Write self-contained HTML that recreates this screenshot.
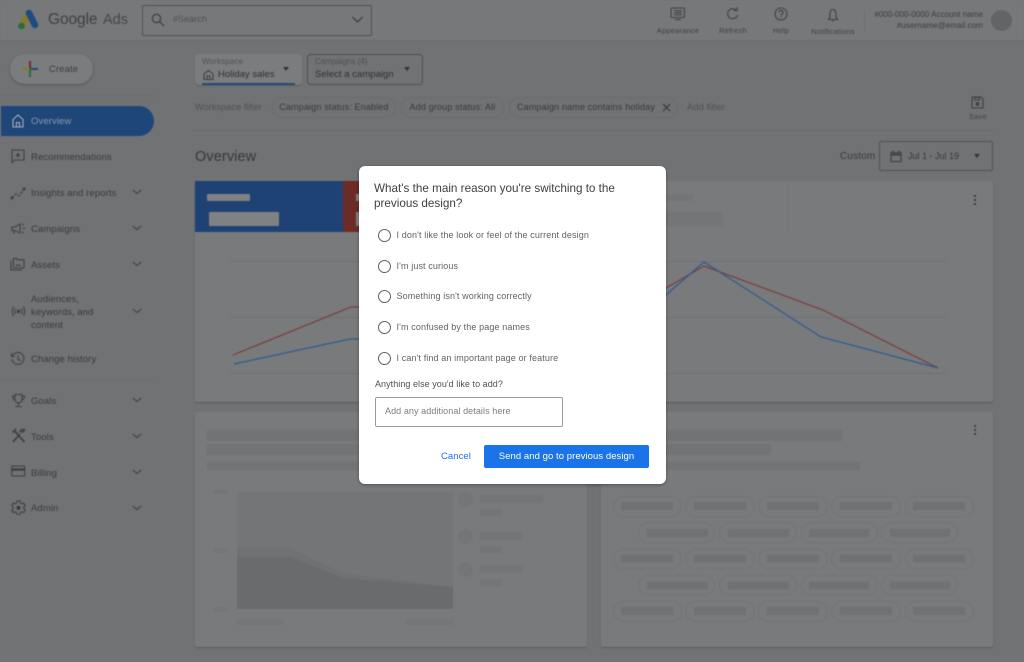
<!DOCTYPE html>
<html><head><meta charset="utf-8"><style>
*{box-sizing:border-box}
html,body{margin:0;padding:0;width:1024px;height:662px;overflow:hidden;background:#717274}
body{font-family:"Liberation Sans",sans-serif;position:relative;color:#3c3d3f}
.t{position:absolute;white-space:nowrap;line-height:1}
.b{position:absolute}
#bg{position:absolute;left:0;top:0;width:1024px;height:662px;filter:blur(.4px)}
.card{position:absolute;background:#797a7c;border-radius:2px;box-shadow:0 1px 1px #5a5b5d}
.nav{font-size:9.5px;letter-spacing:.1px;color:#38393b;left:31px}
.hd{font-size:7.5px;color:#3f4042;letter-spacing:.2px;text-align:center;transform:translateX(-50%)}
.chip{position:absolute;top:97px;height:21px;border:1px solid #6c6d6f;border-radius:11px;font-size:9px;letter-spacing:.16px;line-height:19px;color:#38393b;text-align:center;white-space:nowrap}
.bar{position:absolute;background:#6f7072}
.q{font-size:9px;letter-spacing:.12px;color:#5f6368}
#dlg{position:absolute;left:359px;top:166px;width:307px;height:318px;background:#fff;border-radius:6px;box-shadow:0 1px 3px rgba(0,0,0,.35)}
#dlg>*{filter:blur(.2px)}
.r{position:absolute;left:19px;width:13px;height:13px;border:1.5px solid #5f6368;border-radius:50%}
</style></head><body>
<div id="bg">
<div class="b" style="left:0;top:0;width:1024px;height:41px;background:#77787a;border-bottom:1px solid #6b6c6e"></div>
<svg class="b" style="left:17px;top:9px" width="23" height="21" viewBox="0 0 23 21"><path d="M5 16L11 6" stroke="#8a7a22" stroke-width="6" stroke-linecap="round"/><path d="M12 4L18 16" stroke="#1f4b80" stroke-width="6.5" stroke-linecap="round"/><circle cx="4.5" cy="17" r="3.3" fill="#2a6a40"/></svg>
<div class="t" style="left:48px;top:12px;font-size:15.5px;color:#3e3f41;letter-spacing:-.1px">Google</div>
<div class="t" style="left:103px;top:13px;font-size:14.5px;color:#444547">Ads</div>
<div class="b" style="left:142px;top:5px;width:230px;height:31px;border:1px solid #505153;border-radius:2px"></div>
<svg class="b" style="left:150px;top:12px" width="16" height="16" fill="none" stroke="#3f4042" stroke-width="1.3"><circle cx="6.5" cy="6.5" r="4.2"/><path d="M9.7 9.7L14 14"/></svg>
<div class="t" style="left:173px;top:15px;font-size:9px;color:#505153;letter-spacing:.05px">#Search</div>
<svg class="b" style="left:351px;top:15px" width="13" height="10" fill="none" stroke="#38393b" stroke-width="1.2"><path d="M1.500 2L6.500 7L11.500 2"/></svg>

<svg class="b" style="left:670px;top:7px" width="16" height="14" fill="none" stroke="#3f4042" stroke-width="1"><rect x="1" y="1" width="13.500" height="9.500" rx="1"/><path d="M4 3.800h8M4 5.800h8M4 7.800h8M5 12.500h6"/></svg>
<div class="t hd" style="left:678px;top:27px">Appearance</div>
<svg class="b" style="left:725px;top:7px" width="15" height="14" fill="none" stroke="#3f4042" stroke-width="1.100"><path d="M11.500 3.500A5 5 0 1 0 12.500 8"/><path d="M8.500 3.500h3.600V0"/></svg>
<div class="t hd" style="left:733px;top:27px">Refresh</div>
<svg class="b" style="left:774px;top:7px" width="14" height="14" fill="none" stroke="#3f4042" stroke-width="1.100"><circle cx="7" cy="7" r="6"/><path d="M5 5.500a2 2 0 1 1 3 1.700c-.7.4-1 .8-1 1.600M7 10v1"/></svg>
<div class="t hd" style="left:781px;top:27px">Help</div>
<svg class="b" style="left:826px;top:8px" width="14" height="15" fill="none" stroke="#3f4042" stroke-width="1.100"><path d="M7 1.500C4.500 1.500 4 4 4 6v3.500L2.500 11.500h9L10 9.500V6C10 4 9.500 1.500 7 1.500zM6 13h2"/></svg>
<div class="t hd" style="left:833px;top:28px">Notifications</div>
<div class="b" style="left:864px;top:10px;width:1px;height:21px;background:#6c6d6f"></div>
<div class="t" style="right:41px;top:11px;font-size:8px;color:#3c3d3f;letter-spacing:.06px">#000-000-0000 Account name</div>
<div class="t" style="right:41px;top:22px;font-size:8px;color:#3c3d3f;letter-spacing:.08px">#username@email.com</div>
<div class="b" style="left:991px;top:10px;width:21px;height:21px;border-radius:50%;background:#636466"></div>

<div class="b" style="left:10px;top:54px;width:83px;height:30px;border-radius:15px;background:#7b7c7e;box-shadow:0 1px 2px #545557"></div>
<svg class="b" style="left:21px;top:60px" width="17" height="18" stroke-width="2"><path d="M9 1v8" stroke="#6c2b27"/><path d="M9 9v8" stroke="#2a6a40"/><path d="M1 9h8" stroke="#8a7a22"/><path d="M9 9h8" stroke="#1f4b80"/></svg>
<div class="t" style="left:49px;top:65px;font-size:9.500px;color:#3c3d3f;letter-spacing:.1px">Create</div>
<div class="b" style="left:0;top:95px;width:154px;height:1px;background:#6c6d6f"></div>

<div class="b" style="left:1px;top:106px;width:153px;height:30px;border-radius:0 15px 15px 0;background:#1e4679"></div>
<svg class="b" style="left:11px;top:113px" width="14" height="16" fill="none" stroke="#a8aeb8" stroke-width="1.100"><path d="M2 14V6.500L7 2l5 4.500V14zM5.500 14V9.500h3V14"/></svg>
<div class="t nav" style="top:117px;color:#8d99ac">Overview</div>

<svg class="b" style="left:10px;top:148px" width="16" height="16" fill="none" stroke="#3f4042" stroke-width="1.100"><path d="M2 2h12v10H4.500L2 14.500z"/><path d="M8 4.500l.8 1.700 1.700.2-1.300 1.100.4 1.700L8 8.300l-1.600.9.400-1.700-1.300-1.100 1.700-.2z" fill="#3f4042" stroke="none"/></svg>
<div class="t nav" style="top:153px">Recommendations</div>
<svg class="b" style="left:10px;top:186px" width="16" height="15" fill="none" stroke="#3f4042" stroke-width="1.100"><path d="M2 12L6 7.500 9 10 14 3" stroke-dasharray="3 1.200"/><circle cx="2" cy="12" r="1" fill="#3f4042"/><circle cx="14" cy="3" r="1" fill="#3f4042"/></svg>
<div class="t nav" style="top:189px">Insights and reports</div>
<svg class="b" style="left:11px;top:222px" width="15" height="14" fill="none" stroke="#3f4042" stroke-width="1.100"><path d="M1 5h3l5-3v9L4 8.500H1zM3 8.500V12M11 3l2-1M11.500 6.500H14M11 10l2 1"/></svg>
<div class="t nav" style="top:225px">Campaigns</div>
<svg class="b" style="left:10px;top:257px" width="16" height="14" fill="none" stroke="#3f4042" stroke-width="1.100"><path d="M3.500 1.500h3l1 1.200h6.500v8.300H3.500zM1 3.500V13h11"/><path d="M5.500 9l1.800-2 1.200 1.200 1-.9L11.500 9z" fill="#3f4042" stroke="none"/></svg>
<div class="t nav" style="top:261px">Assets</div>
<svg class="b" style="left:11px;top:305px" width="15" height="13" fill="none" stroke="#3f4042" stroke-width="1.100"><path d="M2.500 1.500C1 4.500 1 8 2.500 11M12.500 1.500C14 4.500 14 8 12.500 11M4.500 3.500C3.800 5 3.800 7.500 4.500 9M10.500 3.500C11.200 5 11.200 7.500 10.500 9"/><circle cx="7.500" cy="6.300" r="1.300" fill="#3f4042"/></svg>
<div class="t nav" style="top:295px">Audiences,</div>
<div class="t nav" style="top:308px">keywords, and</div>
<div class="t nav" style="top:321px">content</div>
<svg class="b" style="left:10px;top:351px" width="16" height="16" fill="none" stroke="#3f4042" stroke-width="1.100"><path d="M2.500 5A6 6 0 1 1 2 8M1.500 2v3.500H5M8 4.500V8l2.500 1.800"/></svg>
<div class="t nav" style="top:355px">Change history</div>
<div class="b" style="left:0;top:379px;width:154px;height:1px;background:#6c6d6f"></div>
<svg class="b" style="left:11px;top:393px" width="15" height="15" fill="none" stroke="#3f4042" stroke-width="1.100"><path d="M4 1.500h7v5a3.500 3.500 0 0 1-7 0zM4 3H1.500c0 2.500.8 3.500 2.700 4M11 3h2.500c0 2.500-.8 3.500-2.700 4M7.500 10v2.500M4.500 13.500h6"/></svg>
<div class="t nav" style="top:397px">Goals</div>
<svg class="b" style="left:11px;top:428px" width="15" height="16" fill="none" stroke="#3f4042" stroke-width="1.700"><path d="M2 14L9 6M13.500 14L4 3.500M1.500 4.500L5 1M9 4.500a3 3 0 0 1 4.500-2.500L11 4.500"/></svg>
<div class="t nav" style="top:433px">Tools</div>
<svg class="b" style="left:11px;top:465px" width="15" height="13" fill="none" stroke="#3f4042" stroke-width="1.100"><rect x=".7" y="1" width="13" height="10" rx=".5"/><path d="M.7 4.500h13" stroke-width="2.500"/></svg>
<div class="t nav" style="top:469px">Billing</div>
<svg class="b" style="left:11px;top:500px" width="15" height="15" fill="none" stroke="#3f4042" stroke-width="1.100"><path d="M6 1h3l.4 2 1.500.8 1.900-.7 1.500 2.600-1.500 1.300v1.700l1.500 1.300-1.500 2.600-1.900-.7-1.500.8-.4 2H6l-.4-2-1.500-.8-1.900.7L.7 10l1.500-1.300V7L.7 5.700l1.500-2.600 1.900.7 1.500-.8z"/><circle cx="7.500" cy="7.800" r="1.600" fill="#3f4042"/></svg>
<div class="t nav" style="top:504px">Admin</div>
<svg class="b" style="left:132px;top:188px" width="10" height="330" fill="none" stroke="#3f4042" stroke-width="1.100"><path d="M.7 2L5 5.500 9.300 2M.7 38l4.300 3.500L9.300 38M.7 74l4.300 3.500L9.300 74M.7 121l4.300 3.500L9.300 121M.7 210l4.300 3.500L9.300 210M.7 246l4.300 3.500L9.300 246M.7 282l4.300 3.500L9.300 282M.7 318l4.300 3.500L9.300 318"/></svg>

<div class="b" style="left:195px;top:54px;width:107px;height:31px;background:#7b7c7e;border-radius:4px;box-shadow:0 1px 1px #5e5f61"></div>
<div class="t" style="left:202px;top:58px;font-size:8px;color:#505153;letter-spacing:.15px">Workspace</div>
<svg class="b" style="left:203px;top:69px" width="11" height="12" fill="none" stroke="#3f4042" stroke-width="1.100"><path d="M1 10.500V5L5.500 1.500 10 5v5.500zM4 10.500V7h3v3.500"/></svg>
<div class="t" style="left:218px;top:70px;font-size:9.500px;color:#2f3032">Holiday sales</div>
<div class="b" style="left:283px;top:67px;border:3.500px solid transparent;border-top:4px solid #333436"></div>
<div class="b" style="left:202px;top:83px;width:93px;height:2px;background:#1f4b80"></div>
<div class="b" style="left:307px;top:54px;width:116px;height:31px;border:1px solid #505153;border-radius:4px"></div>
<div class="t" style="left:315px;top:58px;font-size:8px;color:#505153">Campaigns (4)</div>
<div class="t" style="left:315px;top:70px;font-size:9.500px;color:#2f3032;letter-spacing:.03px">Select a campaign</div>
<div class="b" style="left:404px;top:67px;border:3.500px solid transparent;border-top:4px solid #333436"></div>

<div class="t" style="left:195px;top:103px;font-size:9px;color:#505153;letter-spacing:.16px">Workspace filter</div>
<div class="chip" style="left:272px;width:124px">Campaign status: Enabled</div>
<div class="chip" style="left:401px;width:103px">Add group status: All</div>
<div class="chip" style="left:509px;width:169px;text-align:left;padding-left:7px">Campaign name contains holiday</div>
<svg class="b" style="left:662px;top:103px" width="9" height="9" stroke="#333436" stroke-width="1"><path d="M1 1l7 7M8 1l-7 7"/></svg>
<div class="t" style="left:687px;top:103px;font-size:9.500px;color:#505153">Add filter</div>
<svg class="b" style="left:971px;top:96px" width="13" height="13" fill="none" stroke="#3f4042" stroke-width="1.100"><path d="M1 1h9l2 2v9H1z"/><path d="M3.500 1.500h5v2.500h-5z"/><circle cx="6.500" cy="8" r="1.300" fill="#3f4042"/></svg>
<div class="t hd" style="left:978px;top:113px;color:#444547">Save</div>
<div class="b" style="left:195px;top:130px;width:798px;height:1px;background:#6c6d6f"></div>

<div class="t" style="left:195px;top:150px;font-size:14.500px;color:#37383a;letter-spacing:.1px">Overview</div>
<div class="t" style="left:840px;top:152px;font-size:10px;color:#38393b;letter-spacing:.15px">Custom</div>
<div class="b" style="left:879px;top:141px;width:114px;height:30px;border:1px solid #505153;border-radius:2px"></div>
<svg class="b" style="left:890px;top:150px" width="12" height="13" fill="none" stroke="#3f4042" stroke-width="1.100"><rect x="1" y="2.500" width="10" height="9"/><path d="M1 4.500h10" stroke-width="2"/><path d="M3 .5v2M9 .5v2"/></svg>
<div class="t" style="left:908px;top:152px;font-size:9px;color:#38393b">Jul 1 - Jul 19</div>
<div class="b" style="left:974px;top:154px;border:3.500px solid transparent;border-top:4px solid #333436"></div>

<div class="card" style="left:195px;top:181px;width:798px;height:221px"></div>
<div class="b" style="left:195px;top:181px;width:148px;height:51px;background:#1d4273"></div>
<div class="b" style="left:343px;top:181px;width:40px;height:51px;background:#6c2b27"></div>
<div class="b" style="left:207px;top:194px;width:43px;height:7px;background:#808183;border-radius:1px"></div>
<div class="b" style="left:209px;top:212px;width:70px;height:14px;background:#808183;border-radius:1px"></div>
<div class="b" style="left:356px;top:194px;width:20px;height:7px;background:#808183"></div>
<div class="b" style="left:356px;top:212px;width:20px;height:14px;background:#808183"></div>
<div class="bar" style="left:650px;top:194px;width:43px;height:7px;background:#747577"></div>
<div class="bar" style="left:650px;top:212px;width:73px;height:14px;background:#747577"></div>
<div class="b" style="left:787px;top:183px;width:1px;height:49px;background:#727375"></div>
<svg class="b" style="left:0;top:0" width="1024" height="662" fill="none">
<path d="M230 261.500H946M230 317.500H946M230 373.500H946" stroke="#6f7072" stroke-width="1"/>
<path d="M233 355L351 307L365 307L660 291.500L704 266L823 310L938 368" stroke="#7d3b3a" stroke-width="1.200"/>
<path d="M234 364L350 339L365 339L660 300L704 262L821 337L938 368" stroke="#2c5a94" stroke-width="1.200"/>
</svg>
<svg class="b" style="left:973px;top:194px" width="4" height="12" fill="#38393b"><circle cx="2" cy="2" r="1.100"/><circle cx="2" cy="6" r="1.100"/><circle cx="2" cy="10" r="1.100"/></svg>

<div class="card" style="left:195px;top:412px;width:392px;height:235px"></div>
<div class="bar" style="left:207px;top:430px;width:200px;height:11px;background:#727375"></div>
<div class="bar" style="left:207px;top:444px;width:200px;height:11px;background:#727375"></div>
<div class="bar" style="left:207px;top:462px;width:200px;height:8px;background:#727375"></div>
<div class="bar" style="left:213px;top:489px;width:15px;height:5px;background:#757678"></div>
<div class="bar" style="left:213px;top:548px;width:15px;height:5px;background:#757678"></div>
<div class="bar" style="left:213px;top:607px;width:15px;height:5px;background:#757678"></div>
<svg class="b" style="left:237px;top:492px" width="216" height="117"><rect width="216" height="117" fill="#747577"/><path d="M0 56H53L106 81L216 95V117H0z" fill="#707173"/><path d="M0 65H53L106 86L216 95V117H0z" fill="#6a6b6d"/></svg>
<div class="bar" style="left:236px;top:619px;width:48px;height:6px;background:#757678"></div>
<div class="bar" style="left:405px;top:619px;width:48px;height:6px;background:#757678"></div>
<div class="b" style="left:458px;top:492px;width:15px;height:15px;border-radius:50%;background:#747577"></div>
<div class="b" style="left:458px;top:529px;width:15px;height:15px;border-radius:50%;background:#747577"></div>
<div class="b" style="left:458px;top:562px;width:15px;height:15px;border-radius:50%;background:#747577"></div>
<div class="bar" style="left:480px;top:495px;width:63px;height:8px;background:#747577"></div>
<div class="bar" style="left:480px;top:509px;width:22px;height:7px;background:#747577"></div>
<div class="bar" style="left:480px;top:532px;width:43px;height:8px;background:#747577"></div>
<div class="bar" style="left:480px;top:546px;width:22px;height:7px;background:#747577"></div>
<div class="bar" style="left:480px;top:565px;width:43px;height:8px;background:#747577"></div>
<div class="bar" style="left:480px;top:579px;width:22px;height:7px;background:#747577"></div>

<div class="card" style="left:601px;top:412px;width:392px;height:235px"></div>
<div class="bar" style="left:614px;top:430px;width:228px;height:11px;background:#727375"></div>
<div class="bar" style="left:614px;top:444px;width:157px;height:11px;background:#727375"></div>
<div class="bar" style="left:614px;top:462px;width:246px;height:8px;background:#727375"></div>
<svg class="b" style="left:973px;top:424px" width="4" height="12" fill="#38393b"><circle cx="2" cy="2" r="1.100"/><circle cx="2" cy="6" r="1.100"/><circle cx="2" cy="10" r="1.100"/></svg>
<svg class="b" style="left:0;top:0" width="1024" height="662" fill="none" stroke="#737476">
<g id="r1"><rect x="613.500" y="496.500" width="68" height="20" rx="10"/><rect x="685.500" y="496.500" width="69" height="20" rx="10"/><rect x="758.500" y="496.500" width="69" height="20" rx="10"/><rect x="831.500" y="496.500" width="69" height="20" rx="10"/><rect x="905.500" y="496.500" width="68" height="20" rx="10"/>
<g fill="#707173" stroke="none"><rect x="621" y="502" width="52" height="8"/><rect x="694" y="502" width="52" height="8"/><rect x="767" y="502" width="52" height="8"/><rect x="840" y="502" width="52" height="8"/><rect x="913" y="502" width="52" height="8"/></g></g>
<g id="r2"><rect x="638.500" y="522.500" width="76" height="20" rx="10"/><rect x="719.500" y="522.500" width="77" height="20" rx="10"/><rect x="801.500" y="522.500" width="76" height="20" rx="10"/><rect x="881.500" y="522.500" width="76" height="20" rx="10"/>
<g fill="#707173" stroke="none"><rect x="647" y="529" width="61" height="8"/><rect x="728" y="529" width="61" height="8"/><rect x="809" y="529" width="60" height="8"/><rect x="890" y="529" width="60" height="8"/></g></g>
<use href="#r1" y="52.500"/><use href="#r2" y="52.500"/><use href="#r1" y="105"/>
</svg>
</div>

<div id="dlg">
<div class="t" style="left:15px;top:17px;font-size:11.700px;color:#3c4043">What's the main reason you're switching to the</div>
<div class="t" style="left:15px;top:32px;font-size:11.700px;color:#3c4043">previous design?</div>
<div class="r" style="top:63px"></div><div class="t q" style="left:37.500px;top:65px">I don't like the look or feel of the current design</div>
<div class="r" style="top:94px"></div><div class="t q" style="left:37.500px;top:96px">I'm just curious</div>
<div class="r" style="top:124px"></div><div class="t q" style="left:37.500px;top:126px">Something isn't working correctly</div>
<div class="r" style="top:155px"></div><div class="t q" style="left:37.500px;top:157px">I'm confused by the page names</div>
<div class="r" style="top:186px"></div><div class="t q" style="left:37.500px;top:188px">I can't find an important page or feature</div>
<div class="t q" style="left:16px;top:214px;color:#4d5155;letter-spacing:.05px">Anything else you'd like to add?</div>
<div class="b" style="left:16px;top:231px;width:188px;height:30px;border:1px solid #9a9b9d;border-radius:2px"></div>
<div class="t q" style="left:26px;top:241px;color:#7a7d81;letter-spacing:.08px">Add any additional details here</div>
<div class="t" style="left:82px;top:286px;font-size:9.500px;color:#1a73e8;letter-spacing:.05px">Cancel</div>
<div class="b" style="left:125px;top:279px;width:165px;height:23px;background:#1a73e8;border-radius:2px"></div>
<div class="t" style="left:125px;width:165px;text-align:center;top:286px;font-size:9.500px;color:#fff;letter-spacing:.06px">Send and go to previous design</div>
</div>
</body></html>
